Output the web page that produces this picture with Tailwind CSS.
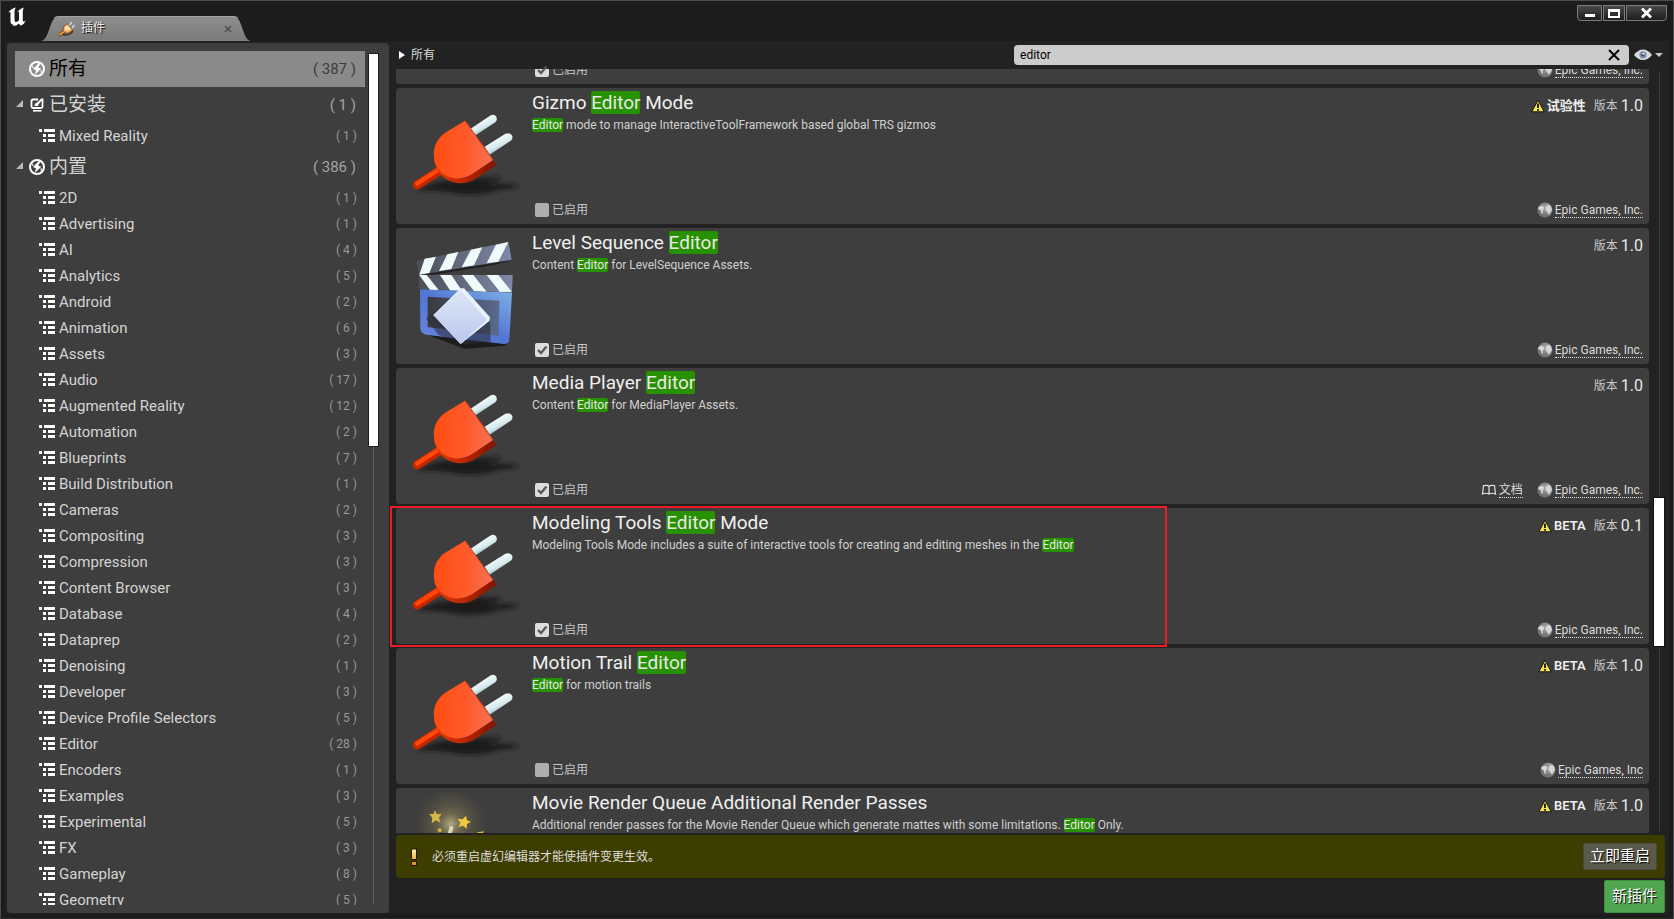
<!DOCTYPE html>
<html lang="zh-CN">
<head>
  <meta charset="UTF-8">
  <meta name="viewport" content="width=device-width, initial-scale=1.0">
  <title>插件</title>
  <script src="https://cdn.jsdelivr.net/npm/@tailwindcss/browser@4"></script>
</head>
<body class="h-screen overflow-hidden bg-[#1c1c1c] font-[Roboto,'Noto_Sans_CJK_SC',sans-serif] text-[#dcdcdc]">

  <!-- Shared artwork -->
  <svg class="absolute h-0 w-0" aria-hidden="true">
    <defs>
      <linearGradient id="plugBody" x1="0" y1="0" x2="1" y2="0">
        <stop offset="0" stop-color="#ff4d12"/>
        <stop offset=".55" stop-color="#ff5a2a"/>
        <stop offset="1" stop-color="#f57055"/>
      </linearGradient>
      <linearGradient id="plugSide" x1="0" y1="0" x2="1" y2="0">
        <stop offset="0" stop-color="#e83a08"/>
        <stop offset="1" stop-color="#801400"/>
      </linearGradient>
      <linearGradient id="prong" x1=".3" y1=".2" x2=".7" y2=".8">
        <stop offset="0" stop-color="#ffffff"/>
        <stop offset=".6" stop-color="#d5ebee"/>
        <stop offset="1" stop-color="#7fa5ab"/>
      </linearGradient>
      <linearGradient id="slate" x1="0" y1="1" x2="1" y2="0">
        <stop offset="0" stop-color="#6a86e0"/>
        <stop offset=".5" stop-color="#5276d4"/>
        <stop offset="1" stop-color="#7fb2e6"/>
      </linearGradient>
      <linearGradient id="slateIn" x1="0" y1="0" x2="1" y2="0">
        <stop offset="0" stop-color="#39393e"/>
        <stop offset="1" stop-color="#5a6a8e"/>
      </linearGradient>
      <linearGradient id="stick" x1="0" y1="0" x2="1" y2="0">
        <stop offset="0" stop-color="#4b4d56"/>
        <stop offset="1" stop-color="#8089a8"/>
      </linearGradient>
      <linearGradient id="gem" x1="0" y1="0" x2="0" y2="1">
        <stop offset="0" stop-color="#dbe7f4"/>
        <stop offset="1" stop-color="#bcc6f0"/>
      </linearGradient>
      <radialGradient id="glow">
        <stop offset="0" stop-color="#b5ab82"/>
        <stop offset=".3" stop-color="#7d7452" stop-opacity=".7"/>
        <stop offset="1" stop-color="#5a553c" stop-opacity="0"/>
      </radialGradient>
      <radialGradient id="ball" cx=".6" cy=".35">
        <stop offset="0" stop-color="#b0b0b0"/>
        <stop offset="1" stop-color="#747474"/>
      </radialGradient>
      <linearGradient id="bang" x1="0" y1="0" x2="0" y2="1">
        <stop offset="0" stop-color="#fff2b0"/>
        <stop offset="1" stop-color="#e08a12"/>
      </linearGradient>
      <linearGradient id="tabFill" x1="0" y1="0" x2="0" y2="1">
        <stop offset="0" stop-color="#8e8e8e"/>
        <stop offset="1" stop-color="#7b7b7b"/>
      </linearGradient>
      <filter id="soft" x="-30%" y="-60%" width="160%" height="220%"><feGaussianBlur stdDeviation="6"/></filter>
    </defs>

    <symbol id="art-plug" viewBox="30 186 384 384">
      <path d="M85 477 C150 448 230 444 330 442 C345 448 310 456 290 460 C330 462 380 462 385 467 C375 475 340 477 325 480 C285 496 220 496 175 487 C150 482 120 480 85 482Z" fill="#141414" opacity=".85" filter="url(#soft)"/>
      <path d="M82 465 L152 420" stroke="#c92600" stroke-width="27" stroke-linecap="round"/>
      <path d="M81 461 L152 415" stroke="#ff4808" stroke-width="13" stroke-linecap="round"/>
      <path d="M242 296 L299 258 Q312 250 319 260 Q324 271 314 278 L257 316Z" fill="url(#prong)"/>
      <path d="M284 350 L345 312 Q358 306 366 316 Q371 327 360 334 L299 374Z" fill="url(#prong)"/>
      <path d="M132 390 C138 425 160 448 190 457 C215 464 240 458 262 443 L319 405 L308 386 Z" fill="url(#plugSide)"/>
      <path d="M225 272 L309 390 L250 430 C218 452 178 450 152 425 C126 398 124 350 151 321 C158 313 168 307 178 301Z" fill="url(#plugBody)"/>
      <path d="M225 272 L309 390" stroke="#d8421c" stroke-width="3"/>
    </symbol>

    <symbol id="art-clapper" viewBox="30 21 384 384">
      <path d="M92 322 L225 372 L345 362 L362 340 L320 330Z" fill="#1c1c1c"/>
      <path d="M90 193 L366 203 L358 345 Q356 357 342 357 L108 329 Q92 326 91 310Z" fill="url(#slate)"/>
      <path d="M113 215 L328 227 L326 332 L113 306Z" fill="url(#slateIn)"/>
      <path d="M108 280 L213 195 L300 290 L302 350 L225 357 L146 330Z" fill="#2b2f3c" opacity=".6"/>
      <path d="M87 149 L368 150 L366 203 L86 191Z" fill="url(#stick)"/>
      <path d="M87 149 L110 150 L146 195 L120 194Z M150 150 L184 150 L216 197 L180 196Z M215 150 L250 150 L290 200 L252 198Z M290 150 L325 150 L365 200 L330 201Z" fill="#effafa"/>
      <path d="M79 107 L355 51 L365 104 L87 149Z" fill="url(#stick)"/>
      <path d="M104 101 L138 95 L118 144 L88 149Z M172 88 L205 81 L184 132 L147 138Z M243 74 L277 67 L252 121 L215 127Z M318 59 L355 51 L325 110 L290 115Z" fill="#effafa"/>
      <path d="M92 150 L365 106 L310 120 L130 149Z" fill="#202024"/>
      <path d="M212 190 L222 190 L300 277 L298 288 L212 357 L130 270Z" fill="#e8f2fa"/>
      <path d="M212 196 L290 284 L212 357 L130 270Z" fill="url(#gem)"/>
    </symbol>

    <symbol id="art-sparkle" viewBox="30 66 384 384">
      <circle cx="182" cy="162" r="110" fill="url(#glow)"/>
      <path d="M134 121 L141 133 L155 131 L147 143 L152 158 L138 151 L125 160 L127 144 L118 132 L131 132Z" fill="#d6b848"/>
      <path d="M228 137 L231 151 L243 155 L231 162 L230 176 L219 167 L206 171 L211 158 L203 147 L218 148Z" fill="#f2c83a"/>
      <circle cx="149" cy="181" r="6" fill="#d8b038"/>
      <path d="M262 187 L282 184 L276 194 L284 206 L270 200Z" fill="#e0b83c"/>
      <path d="M184 174 L150 290" stroke="#dcd7bd" stroke-width="12" stroke-linecap="round"/>
    </symbol>

    <symbol id="icon-bolt" viewBox="0 0 16 16">
      <circle cx="8" cy="8" r="7" fill="none" stroke="#fff" stroke-width="2"/>
      <path d="M9.800 2 L4 8 L7 9.200 L5.800 14 L12.300 7.700 L9.200 6.600 L11.500 2.800Z" fill="#fff"/>
      <path d="M3.800 4.500 V7 M12.200 9 V12" stroke="#fff" stroke-width="1"/>
    </symbol>
    <symbol id="icon-installed" viewBox="0 0 16 16">
      <path d="M9 2.500 H4 Q2.500 2.500 2.500 4 V9.500 Q2.500 11 4 11 H12 Q13.500 11 13.500 9.500 V2.500 H12" fill="none" stroke="#fff" stroke-width="1.800"/>
      <path d="M5.500 9 L6 6.500 L7.500 6 L12 1.800 L13 3 L9.500 7.500 L9 9Z" fill="#fff"/>
      <path d="M4 13.800 H12.500" stroke="#fff" stroke-width="1.600"/>
    </symbol>
    <symbol id="icon-list" viewBox="0 0 16 16">
      <path d="M0 1h3v3H0z M5 1h11v3H5z M4 6h3v3H4z M9 6h7v3H9z M4 11h3v3H4z M9 11h7v3H9z" fill="#fff"/>
    </symbol>
    <symbol id="icon-globe" viewBox="0 0 16 16">
      <circle cx="8" cy="8" r="7.500" fill="url(#ball)"/>
      <path d="M1.500 5 L5 3.500 L7.500 5.500 L6.500 8 L5.500 9 L6 12 L4.500 11.500 L3.500 8 L1 7Z M9 5 L11.500 2.500 L14 4.500 L15 8 L13 11 L12 13 L10.500 10.500 L8.500 8Z" fill="#d6d6d6"/>
    </symbol>
    <symbol id="icon-warn" viewBox="0 0 14 14">
      <path d="M7 1.200 L13.200 12.800 H.8Z" fill="#f7e64b" stroke="#151515" stroke-width="1" stroke-linejoin="round"/>
      <path d="M7 4.500 V9 M7 10 V11.800" stroke="#111" stroke-width="1.800"/>
    </symbol>
    <symbol id="icon-book" viewBox="0 0 16 12">
      <path d="M8 2.300 Q6 .8 3.500 1.500 H2.500 L1.500 10 Q5 8.500 8 10 Q11 8.500 14.500 10 L13.500 1.500 H12.500 Q10 .8 8 2.300 V10" fill="none" stroke="#e4e4e4" stroke-width="1.200"/>
    </symbol>
  </svg>

  <div class="flex h-full flex-col border border-[#4c4c4c] border-b-[#2a2a2a]">

    <!-- Title bar -->
    <header class="flex h-10 shrink-0 justify-between">
      <div class="flex">
        <svg class="mt-1.5 ml-1.5 h-5 w-5" viewBox="0 0 20 20" aria-label="Unreal">
          <path d="M1 6 Q3.500 1.500 9 .5 Q7.500 2 7.500 4 V13 Q7.500 15.500 9.500 15 Q11 14.500 12 13.300 V5.500 Q12 4.500 10.300 5 Q12.500 1.500 17 .5 Q15.800 2 15.800 4.500 V13.500 Q16 15.500 18.800 13.500 Q17.500 17 13.700 18.800 L11.800 16.500 Q9.500 19 6.500 19 Q7 18 5.500 17.500 Q3.500 16.800 3.500 14.500 V6.500 Q3.500 4 1 6Z" fill="#fff"/>
        </svg>
        <div class="relative mt-[15px] ml-[14px] flex h-[25px] w-[210px] items-center pr-[15px] pl-[18px]">
          <svg class="absolute inset-0 h-full w-full" viewBox="0 0 210 25" preserveAspectRatio="none">
            <path d="M0 25 C9 24 8 0 18 0 H192 C202 0 201 24 210 25Z" fill="url(#tabFill)"/>
            <path d="M13 2 Q15 .5 18 .5 H192 Q195 .5 197 2" fill="none" stroke="#a0a0a0"/>
          </svg>
          <svg class="relative h-4 w-4" viewBox="0 0 16 16">
            <path d="M4 13.500 Q10 14.500 14 10" fill="none" stroke="#3c3c3c" stroke-width="2"/>
            <path d="M1 13.500 L5 10.500" stroke="#6b3410" stroke-width="3.400" stroke-linecap="round"/>
            <path d="M1 13.500 L5 10.500" stroke="#f29a3f" stroke-width="2" stroke-linecap="round"/>
            <path d="M10.500 4 L12.500 1.500 M13 7 L15 4.500" stroke="#b9dcf5" stroke-width="1.600" stroke-linecap="round"/>
            <path d="M8.500 2.800 L13.800 9 Q10 13.500 6 12 Q2.500 9.500 4.800 5.500 Q6 3.800 8.500 2.800Z" fill="#f6a85a" stroke="#7a4018" stroke-width=".8"/>
            <path d="M8.300 4 L12 8.200 Q8.500 10.500 5.500 8.500 Q5.500 5.500 8.300 4Z" fill="#fde0b8"/>
          </svg>
          <span class="relative ml-1.5 flex-1 pb-0.5 text-xs text-[#eeeeee] [text-shadow:1px_1px_1px_#000]">插件</span>
          <button type="button" aria-label="关闭标签" class="relative h-4 w-4">
            <svg class="h-4 w-4" viewBox="0 0 16 16"><path d="M5 5 L11 11 M11 5 L5 11" stroke="#4a4a4a" stroke-width="1.200"/></svg>
          </button>
        </div>
      </div>
      <div class="mt-1 mr-1.5 flex h-4 gap-px">
        <button type="button" aria-label="最小化" class="flex w-[25px] items-center justify-center rounded-bl-sm border border-[#7c7c7c] bg-linear-to-b from-[#4a4a4a] to-[#1e1e1e]">
          <svg class="h-3 w-3" viewBox="0 0 12 12"><path d="M1 7h10v3H1z" fill="#fff"/></svg>
        </button>
        <button type="button" aria-label="最大化" class="flex w-[22px] items-center justify-center border border-[#7c7c7c] bg-linear-to-b from-[#4a4a4a] to-[#1e1e1e]">
          <svg class="h-3 w-3" viewBox="0 0 12 12"><path d="M0 2h12v9H0z M2 5v4h8V5z" fill="#fff" fill-rule="evenodd"/></svg>
        </button>
        <button type="button" aria-label="关闭" class="flex w-[41px] items-center justify-center rounded-br-sm border border-[#7c7c7c] bg-linear-to-b from-[#4a4a4a] to-[#1e1e1e]">
          <svg class="h-3 w-3" viewBox="0 0 12 12"><path d="M1 1.500 L10 10.500 M10 1.500 L1 10.500" stroke="#fff" stroke-width="2.800"/></svg>
        </button>
      </div>
    </header>

    <div class="mx-1 mb-1 flex min-h-0 flex-1 bg-[#222222] pr-1 pb-px pl-0.5">

      <!-- Category tree -->
      <aside class="mt-0.5 flex w-[382px] shrink-0 gap-[3px] rounded bg-[#3e3e3e] pt-2 pr-2.5 pb-2 pl-2">
        <nav id="tree" class="min-h-0 flex-1 overflow-hidden"></nav>
        <div class="relative mt-0.5 w-[11px]">
          <div class="mx-auto h-full w-px bg-[#5c5c5c]"></div>
          <div class="absolute inset-x-0 top-0 h-[394px] border border-[#1e1e1e] bg-white"></div>
        </div>
      </aside>

      <main class="flex min-w-0 flex-1 flex-col">
        <!-- Breadcrumb and search -->
        <div class="flex h-7 shrink-0 items-center pl-2">
          <svg class="mr-1.5 ml-0.5 h-2.5 w-1.5" viewBox="0 0 6 10"><path d="M0 1 L6 5 L0 9Z" fill="#fff"/></svg>
          <a href="#" class="text-xs">所有</a>
          <div class="relative ml-auto w-[48.5%]">
            <input type="text" id="search" aria-label="搜索" value="editor" class="block h-5 w-full rounded-sm bg-[#cccccc] px-1.5 text-xs text-black outline-none">
            <button type="button" aria-label="清除" class="absolute top-1 right-[9px] h-3 w-3">
              <svg class="h-3 w-3" viewBox="0 0 12 12"><path d="M1 1 L11 11 M11 1 L1 11" stroke="#000" stroke-width="2"/></svg>
            </button>
          </div>
          <button type="button" aria-label="查看选项" class="mr-0.5 ml-[5px] flex items-center gap-[3px]">
            <svg class="h-3 w-[18px]" viewBox="0 0 18 12">
              <path d="M0 6 Q4 .5 9 .5 Q14 .5 18 6 Q14 11 9 11 Q4 11 0 6Z" fill="#dadada"/>
              <circle cx="9" cy="5.800" r="3.600" fill="#7b8cb0"/>
              <circle cx="9" cy="5.800" r="1.600" fill="#3c4660"/>
              <circle cx="9.500" cy="4.800" r="1" fill="#ffffff"/>
            </svg>
            <svg class="h-1.5 w-2" viewBox="0 0 8 6"><path d="M0 1 H8 L4 5Z" fill="#c8c8c8"/></svg>
          </button>
        </div>

        <!-- Plugin list -->
        <div class="flex min-h-0 flex-1 gap-1 overflow-hidden pl-[7px]">
          <div id="plugins" class="flex min-w-0 flex-1 flex-col gap-1"></div>
          <div class="relative my-0.5 w-3">
            <div class="mx-auto h-full w-px bg-[#3c3c3c]"></div>
            <div class="absolute inset-x-0 top-[56%] h-[150px] border border-[#111] bg-white"></div>
          </div>
        </div>

        <!-- Restart notice -->
        <div class="mt-0.5 ml-[7px] flex h-[43px] shrink-0 items-center rounded bg-[#3e3d00] pr-2 pl-3">
          <svg class="h-5 w-3" viewBox="0 0 12 20">
            <path d="M3.500 2 h5 v10.500 h-5z M3.500 14.500 h5 v4 h-5z" fill="url(#bang)" stroke="#2a1600" stroke-width="1"/>
          </svg>
          <p class="ml-3 flex-1 text-xs">必须重启虚幻编辑器才能使插件变更生效。</p>
          <button type="button" class="h-[27px] rounded-xs border border-[#4a4a40] bg-[#5a5a4c] px-1.5 text-[15px] leading-none text-white [text-shadow:1px_1px_1px_#000]">立即重启</button>
        </div>
        <button type="button" class="mt-0.5 h-[33px] shrink-0 self-end rounded-xs border border-[#3f8f3f] bg-[#51a651] px-[7px] text-[15px] leading-none text-white [text-shadow:1px_1px_1px_#000]">新插件</button>
      </main>
    </div>
  </div>

  <script>
    const builtIn = [
      ['2D', 1], ['Advertising', 1], ['AI', 4], ['Analytics', 5], ['Android', 2], ['Animation', 6],
      ['Assets', 3], ['Audio', 17], ['Augmented Reality', 12], ['Automation', 2], ['Blueprints', 7],
      ['Build Distribution', 1], ['Cameras', 2], ['Compositing', 3], ['Compression', 3],
      ['Content Browser', 3], ['Database', 4], ['Dataprep', 2], ['Denoising', 1], ['Developer', 3],
      ['Device Profile Selectors', 5], ['Editor', 28], ['Encoders', 1], ['Examples', 3],
      ['Experimental', 5], ['FX', 3], ['Gameplay', 8], ['Geometry', 5]
    ];

    const plugins = [
      { name: 'Gizmo Editor Mode', desc: 'Editor mode to manage InteractiveToolFramework based global TRS gizmos', art: 'plug', on: false, tag: '试验性', version: '1.0', by: 'Epic Games, Inc.' },
      { name: 'Level Sequence Editor', desc: 'Content Editor for LevelSequence Assets.', art: 'clapper', on: true, version: '1.0', by: 'Epic Games, Inc.' },
      { name: 'Media Player Editor', desc: 'Content Editor for MediaPlayer Assets.', art: 'plug', on: true, version: '1.0', by: 'Epic Games, Inc.', docs: true },
      { name: 'Modeling Tools Editor Mode', desc: 'Modeling Tools Mode includes a suite of interactive tools for creating and editing meshes in the Editor', art: 'plug', on: true, tag: 'BETA', version: '0.1', by: 'Epic Games, Inc.', marked: true },
      { name: 'Motion Trail Editor', desc: 'Editor for motion trails', art: 'plug', on: false, tag: 'BETA', version: '1.0', by: 'Epic Games, Inc' },
      { name: 'Movie Render Queue Additional Render Passes', desc: 'Additional render passes for the Movie Render Queue which generate mattes with some limitations. Editor Only.', art: 'sparkle', tag: 'BETA', version: '1.0' }
    ];

    // Top level entry of the tree
    function group(name, count, icon, selected) {
      return `
        <a href="#" class="flex h-9 items-center pr-[9px] ${selected ? 'bg-[#8a8a8a]' : ''}">
          <span class="w-3.5">${selected ? '' : '<svg class="mb-1 ml-px h-[7px] w-[7px]" viewBox="0 0 7 7"><path d="M7 0 V7 H0Z" fill="#b8b8b8"/></svg>'}</span>
          <svg class="h-4 w-4"><use href="#icon-${icon}"/></svg>
          <span class="ml-1 flex-1 text-[19px] ${selected ? 'text-black' : 'text-[#d4d4d4]'}">${name}</span>
          <span class="text-[15px] ${selected ? 'text-[#3c3c3c]' : 'text-[#a4a4a4]'}">( ${count} )</span>
        </a>`;
    }

    function category([name, count]) {
      return `
        <a href="#" class="flex h-[26px] items-center pr-2 pl-6">
          <svg class="h-4 w-4"><use href="#icon-list"/></svg>
          <span class="ml-1 flex-1 text-[15px] text-[#d4d4d4]">${name}</span>
          <span class="text-xs text-[#999999]">( ${count} )</span>
        </a>`;
    }

    // Wrap the search term in a green mark
    function mark(text) {
      return text.replace('Editor', '<mark class="rounded-xs bg-[#279100] text-[#e8e8e8]">Editor</mark>');
    }

    function footer(id, p) {
      return `
        <div class="flex h-4 items-center text-xs">
          <label for="${id}" class="ml-[3px] flex items-center gap-[3px] text-[#c8c8c8]">
            <input type="checkbox" id="${id}" ${p.on ? 'checked' : ''} class="peer h-3.5 w-3.5 appearance-none rounded-xs bg-[#adadad] checked:bg-[#dcdcdc]">
            <svg class="absolute hidden h-3.5 w-3.5 peer-checked:block" viewBox="0 0 14 14"><path d="M3 7 L6 10 L11.500 3.500" fill="none" stroke="#5a5a5a" stroke-width="2.400"/></svg>
            已启用
          </label>
          <span class="flex-1"></span>
          ${p.docs ? '<svg class="mr-0.5 h-3 w-4"><use href="#icon-book"/></svg><a href="#" class="mr-3.5 border-b border-dotted border-[#e0e0e0] leading-[14px]">文档</a>' : ''}
          <svg class="mr-0.5 h-4 w-4"><use href="#icon-globe"/></svg>
          <a href="#" class="border-b border-dotted border-[#e0e0e0] leading-[14px]">${p.by}</a>
        </div>`;
    }

    function card(p, i) {
      return `
        <article class="relative flex h-[136px] shrink-0 rounded bg-[#3e3e3e] py-1 pr-1.5 pl-1">
          <svg class="mr-1 h-32 w-32 shrink-0"><use href="#art-${p.art}"/></svg>
          <div class="flex min-w-0 flex-1 flex-col pb-0.5">
            <div class="flex h-[22px]">
              <h2 class="flex-1 text-[19px] leading-[22px] text-[#f0f0f0]">${mark(p.name)}</h2>
              <div class="flex items-center pt-1.5">
                ${p.tag ? `<svg class="mr-0.5 h-3.5 w-3.5"><use href="#icon-warn"/></svg><b class="mr-2 text-[13px] font-semibold text-[#f0f0f0]">${p.tag}</b>` : ''}
                <span class="mr-[3px] text-xs text-[#c8c8c8]">版本</span>
                <span class="text-base text-[#e8e8e8]">${p.version}</span>
              </div>
            </div>
            <p class="mt-1 flex-1 text-xs leading-[14px] text-[#d0d0d0]">${mark(p.desc)}</p>
            ${p.by ? footer('enabled' + i, p) : ''}
          </div>
          ${p.marked ? '<div class="absolute -top-0.5 -left-1.5 h-[141px] w-[62%] border-2 border-[#ed1c24]"></div>' : ''}
        </article>`;
    }

    document.getElementById('tree').innerHTML =
      group('所有', 387, 'bolt', true) +
      group('已安装', 1, 'installed', false) +
      category(['Mixed Reality', 1]) +
      group('内置', 386, 'bolt', false) +
      builtIn.map(category).join('');

    // The first card is scrolled almost out of view, only its footer shows
    document.getElementById('plugins').innerHTML = `
      <article class="flex h-[15px] shrink-0 flex-col justify-end overflow-hidden rounded-b bg-[#3e3e3e] pr-1.5 pb-1.5 pl-[136px]">
        ${footer('enabledPrev', { on: true, by: 'Epic Games, Inc.' })}
      </article>` + plugins.map(card).join('');
  </script>
</body>
</html>
